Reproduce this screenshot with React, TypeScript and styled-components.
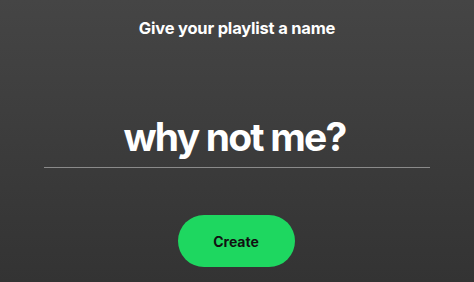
import React from 'react';
import styled, { createGlobalStyle } from 'styled-components';

const GlobalStyle = createGlobalStyle`
    html, body {
        margin: 0;
        padding: 0;
        background: #3a3a3a;
    }
    * {
        box-sizing: border-box;
    }
`;

const Screen = styled.div`
    width: 474px;
    height: 282px;
    display: flex;
    flex-direction: column;
    align-items: center;
    background: linear-gradient(180deg, #454545 0%, #3c3c3c 50%, #333333 100%);
    font-family: Inter, 'Liberation Sans', sans-serif;
    color: #ffffff;
    overflow: hidden;
`;

const Title = styled.h1`
    margin: 17px 0 0;
    font-size: 16.5px;
    font-weight: 700;
    letter-spacing: -0.2px;
    line-height: 22px;
`;

const NameField = styled.div`
    margin-top: 75px;
    width: 386px;
    display: flex;
    justify-content: center;
    border-bottom: 1px solid #8a8a8a;
    padding-bottom: 7px;
`;

const NameText = styled.div`
    margin-right: 5px;
    font-size: 39px;
    font-weight: 700;
    letter-spacing: -1.8px;
    line-height: 46px;
`;

const CreateButton = styled.button`
    margin-top: 47px;
    margin-left: -2px;
    width: 117px;
    height: 52px;
    border: none;
    border-radius: 26px;
    background: #1ed760;
    color: #111111;
    font-family: inherit;
    font-size: 14px;
    font-weight: 700;
    cursor: pointer;
`;

const App: React.FC = () => (
    <>
        <GlobalStyle />
        <Screen>
            <Title>Give your playlist a name</Title>
            <NameField>
                <NameText>why not me?</NameText>
            </NameField>
            <CreateButton>Create</CreateButton>
        </Screen>
    </>
);

export default App;
